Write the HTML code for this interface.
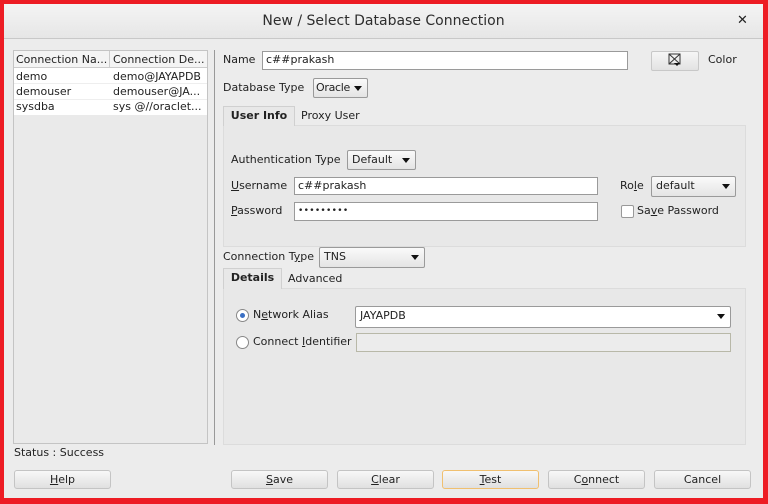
<!DOCTYPE html><html><head><style>
*{box-sizing:border-box;margin:0;padding:0}
body{width:768px;height:504px;background:#ed1c24;font-family:"DejaVu Sans","Liberation Sans",sans-serif;font-size:11px;color:#222;position:relative;overflow:hidden}
.a{position:absolute}
#win{left:4px;top:4px;width:759px;height:494px;background:#ececec}
#title{left:4px;top:4px;width:759px;height:35px;background:linear-gradient(#f4f4f4,#e6e6e6);border-bottom:1px solid #c8c8c8;text-align:center;line-height:35px;font-size:14px;color:#2e2e2e}
.in{background:#fff;border:1px solid #9a9a9a;padding-left:3px;line-height:16px;white-space:nowrap;overflow:hidden}
.dd{background:linear-gradient(#fafafa,#e4e4e4);border:1px solid #9a9a9a;border-radius:2px;padding-left:4px;line-height:18px;white-space:nowrap}
.dd:after{content:"";position:absolute;right:5px;top:7px;border-left:4px solid transparent;border-right:4px solid transparent;border-top:5px solid #111}
.btn{background:linear-gradient(#f8f8f8,#e0e0e0);border:1px solid #c4c4c4;border-radius:3px;text-align:center;line-height:17px;height:19px;width:97px;top:470px}
.panel{border:1px solid #dcdcdc;background:#e8e8e8}
.tab{background:#ececec;border:1px solid #d0d0d0;border-bottom:none;font-weight:bold;text-align:center;line-height:18px}
u{text-decoration:underline}
</style></head><body>
<div id="win" class="a"></div>
<div id="title" class="a">New / Select Database Connection</div>
<div class="a" style="left:737px;top:13px;font-size:13px;font-weight:bold">✕</div>

<div class="a" style="left:13px;top:50px;width:195px;height:394px;background:#eaeaea;border:1px solid #c4c4c4"></div>
<div class="a" style="left:14px;top:51px;width:193px;height:17px;background:#f4f4f4;border-bottom:1px solid #ccc"></div>
<div class="a" style="left:109px;top:51px;width:1px;height:17px;background:#ccc"></div>
<div class="a" style="left:16px;top:53px">Connection Na...</div>
<div class="a" style="left:113px;top:53px">Connection De...</div>
<div class="a" style="left:14px;top:68px;width:193px;height:47px;background:#fff"></div>
<div class="a" style="left:14px;top:83px;width:193px;height:1px;background:#eee"></div>
<div class="a" style="left:14px;top:99px;width:193px;height:1px;background:#eee"></div>
<div class="a" style="left:16px;top:69px;line-height:15px">demo<br>demouser<br>sysdba</div>
<div class="a" style="left:113px;top:69px;line-height:15px">demo@JAYAPDB<br>demouser@JA...<br>sys @//oraclet...</div>
<div class="a" style="left:214px;top:50px;width:1px;height:395px;background:#999"></div>

<div class="a" style="left:223px;top:53px">Name</div>
<div class="a in" style="left:262px;top:51px;width:366px;height:19px">c##prakash</div>
<div class="a" style="left:651px;top:51px;width:48px;height:20px;background:linear-gradient(#f6f6f6,#e2e2e2);border:1px solid #c8c8c8;border-radius:2px"></div>
<svg class="a" style="left:668px;top:53px" width="14" height="14"><rect x="1" y="1" width="11" height="10" fill="none" stroke="#333"/><path d="M1 1L12 11M12 1L1 11" stroke="#333"/><path d="M6 10h6l-3 3z" fill="#111"/></svg>
<div class="a" style="left:708px;top:53px">Color</div>

<div class="a" style="left:223px;top:81px">Database Type</div>
<div class="a dd" style="left:313px;top:78px;width:55px;height:20px;padding-left:2px;letter-spacing:-0.3px">Oracle</div>

<div class="a panel" style="left:223px;top:125px;width:523px;height:122px"></div>
<div class="a tab" style="left:223px;top:106px;width:72px;height:20px;background:#e8e8e8">User Info</div>
<div class="a" style="left:301px;top:109px">Proxy User</div>

<div class="a" style="left:231px;top:153px">Authentication Type</div>
<div class="a dd" style="left:347px;top:150px;width:69px;height:20px">Default</div>
<div class="a" style="left:231px;top:179px"><u>U</u>sername</div>
<div class="a in" style="left:294px;top:177px;width:304px;height:18px">c##prakash</div>
<div class="a" style="left:620px;top:179px">Ro<u>l</u>e</div>
<div class="a dd" style="left:651px;top:176px;width:85px;height:21px">default</div>
<div class="a" style="left:231px;top:204px"><u>P</u>assword</div>
<div class="a in" style="left:294px;top:202px;width:304px;height:19px;font-size:9px;letter-spacing:0.3px">•••••••••</div>
<div class="a" style="left:621px;top:205px;width:13px;height:13px;background:#fff;border:1px solid #999;border-radius:2px"></div>
<div class="a" style="left:637px;top:204px">Sa<u>v</u>e Password</div>

<div class="a" style="left:223px;top:250px">Connection T<u>y</u>pe</div>
<div class="a dd" style="left:319px;top:247px;width:106px;height:21px">TNS</div>

<div class="a panel" style="left:223px;top:288px;width:523px;height:157px"></div>
<div class="a tab" style="left:223px;top:268px;width:59px;height:21px;background:#e8e8e8">Details</div>
<div class="a" style="left:288px;top:272px">Advanced</div>

<div class="a" style="left:236px;top:309px;width:13px;height:13px;border-radius:50%;background:#fff;border:1px solid #888"></div>
<div class="a" style="left:240px;top:313px;width:5px;height:5px;border-radius:50%;background:#3a6fc4"></div>
<div class="a" style="left:253px;top:308px">N<u>e</u>twork Alias</div>
<div class="a dd" style="left:355px;top:306px;width:376px;height:22px;background:#fff">JAYAPDB</div>
<div class="a" style="left:236px;top:336px;width:13px;height:13px;border-radius:50%;background:#fff;border:1px solid #888"></div>
<div class="a" style="left:253px;top:335px">Connect <u>I</u>dentifier</div>
<div class="a" style="left:356px;top:333px;width:375px;height:19px;background:#ececec;border:1px solid #b8b8a8"></div>

<div class="a" style="left:14px;top:446px">Status : Success</div>
<div class="a btn" style="left:14px"><u>H</u>elp</div>
<div class="a btn" style="left:231px"><u>S</u>ave</div>
<div class="a btn" style="left:337px"><u>C</u>lear</div>
<div class="a btn" style="left:442px;border-color:#f0c070"><u>T</u>est</div>
<div class="a btn" style="left:548px">C<u>o</u>nnect</div>
<div class="a btn" style="left:654px">Cancel</div>
</body></html>
